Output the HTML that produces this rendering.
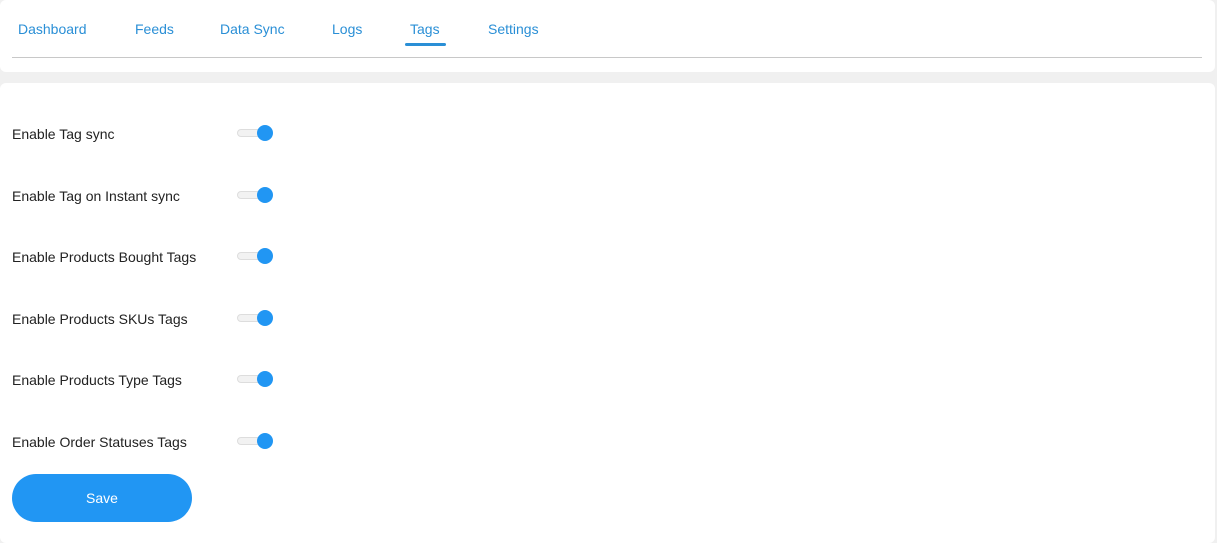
<!DOCTYPE html>
<html><head><style>
body{margin:0;width:1217px;height:536px;background:#f0f0f0;font-family:"Liberation Sans",sans-serif;overflow:hidden;position:relative}
.top{position:absolute;left:0;top:0;width:1215px;height:72px;background:#fff;border-radius:6px}
.tab{position:absolute;top:21px;font-size:14px;color:#2a8fd6}
.ul{position:absolute;left:405px;top:43px;width:41px;height:3px;background:#2a8fd6;border-radius:2px}
.div{position:absolute;left:12px;top:57px;width:1190px;height:1px;background:#c8c8c8}
.card{position:absolute;left:0;top:83px;width:1215px;height:460px;background:#fff;border-radius:6px}
.lbl{position:absolute;left:12px;font-size:14px;color:#222}
.tr{position:absolute;left:237px;width:30px;height:6px;background:#f2f2f2;border:1px solid #ddd;border-radius:4px}
.kn{position:absolute;left:257px;width:16px;height:16px;border-radius:50%;background:#2196f3}
.btn{position:absolute;left:12px;top:474px;width:180px;height:48px;border-radius:24px;background:#2196f3;color:#fff;font-size:14px;text-align:center;line-height:48px}
</style></head><body>
<div class="top">
<span class="tab" style="left:18px">Dashboard</span>
<span class="tab" style="left:135px">Feeds</span>
<span class="tab" style="left:220px">Data Sync</span>
<span class="tab" style="left:332px">Logs</span>
<span class="tab" style="left:410px">Tags</span>
<span class="tab" style="left:488px">Settings</span>
<div class="ul"></div><div class="div"></div>
</div>
<div class="card"></div>
<div class="lbl" style="top:126px">Enable Tag sync</div><div class="tr" style="top:129px"></div><div class="kn" style="top:125px"></div>
<div class="lbl" style="top:188px">Enable Tag on Instant sync</div><div class="tr" style="top:191px"></div><div class="kn" style="top:187px"></div>
<div class="lbl" style="top:249px">Enable Products Bought Tags</div><div class="tr" style="top:252px"></div><div class="kn" style="top:248px"></div>
<div class="lbl" style="top:311px">Enable Products SKUs Tags</div><div class="tr" style="top:314px"></div><div class="kn" style="top:310px"></div>
<div class="lbl" style="top:372px">Enable Products Type Tags</div><div class="tr" style="top:375px"></div><div class="kn" style="top:371px"></div>
<div class="lbl" style="top:434px">Enable Order Statuses Tags</div><div class="tr" style="top:437px"></div><div class="kn" style="top:433px"></div>
<div class="btn">Save</div>
</body></html>
